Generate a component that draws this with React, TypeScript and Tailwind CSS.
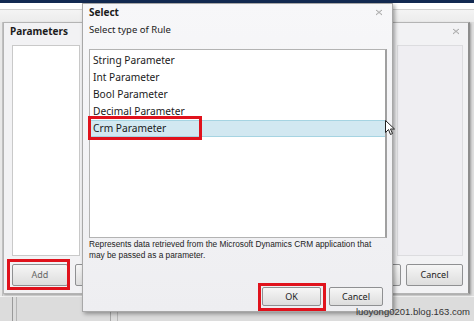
import React from 'react';

const font = { fontFamily: '"Noto Sans", "Open Sans", sans-serif' };

function CloseIcon() {
  return (
    <svg width="8" height="7" viewBox="0 0 8 7" className="text-[#a9a9a9]">
      <path d="M1 1 L7 6 M7 1 L1 6" stroke="currentColor" strokeWidth="1" fill="none" />
      <path d="M2 1 L7 5 M6 1 L1 5" stroke="currentColor" strokeWidth="0.5" fill="none" opacity="0.6" />
    </svg>
  );
}

function Button({ label, className = '' }: { label: string; className?: string }) {
  return (
    <div
      className={`flex items-center justify-center rounded-[2px] border border-[#8f9092] bg-gradient-to-b from-[#f6f6f6] to-[#dddddd] text-[9px] text-[#222] ${className}`}
    >
      {label}
    </div>
  );
}

const items = ['String Parameter', 'Int Parameter', 'Bool Parameter', 'Decimal Parameter', 'Crm Parameter'];

export default function App() {
  return (
    <div className="relative w-[474px] h-[321px] overflow-hidden bg-[#dedede]" style={font}>
      {/* page background */}
      <div className="h-[3px] bg-[#132a52]" />
      <div className="h-[7px] bg-white border-b border-[#d2d2d2]" />
      <div className="h-[12px] bg-gradient-to-b from-[#f4f4f4] to-[#ececec]" />
      <div className="flex h-[299px]">
        <div className="w-[3px] border-r border-[#c4c4c4] bg-[#e8e8e8]" />
      </div>

      {/* bottom strip lines */}
      <div className="absolute left-0 top-[296px] w-[474px] h-[25px] bg-[#dcdcdc] border-t border-[#f2f2f2]">
        <div className="absolute left-[12px] top-0 h-full w-px bg-[#9a9a9a]" />
        <div className="absolute left-[16px] top-0 h-full w-px bg-[#b5b5b5]" />
        <div className="absolute left-[110px] top-0 h-full w-px bg-[#a8a8a8]" />
        <div className="absolute left-[117px] top-0 h-full w-px bg-[#b8b8b8]" />
      </div>

      {/* Parameters window */}
      <div className="absolute left-[3px] top-[22px] w-[467px] h-[272px] flex flex-col bg-[#f2f2f4] border border-[#b4b4b4] border-r-2 border-r-[#8d8d8d] shadow-[1px_1px_2px_rgba(0,0,0,0.3)]">
        <div className="flex items-center justify-between h-[16px] mb-[6px] pl-[6px] pr-[8px]">
          <span className="text-[10px] font-bold text-[#1c1c1c]">Parameters</span>
          <CloseIcon />
        </div>
        <div className="flex justify-between pl-[8px] pr-[5px] h-[211px]">
          <div className="w-[68px] h-full bg-white border border-[#c9c9c9]" />
          <div className="w-[66px] h-full bg-[#efeef2] border border-[#dcdcdf]" />
        </div>
        <div className="flex justify-between pl-[8px] pr-[5px] mt-[8px]">
          <div className="flex gap-[7px]">
            <Button label="Add" className="w-[56px] h-[22px] text-[#666]" />
            <Button label="" className="w-[56px] h-[22px]" />
          </div>
          <div className="flex gap-[5px]">
            <Button label="OK" className="w-[56px] h-[22px]" />
            <Button label="Cancel" className="w-[57px] h-[22px]" />
          </div>
        </div>
      </div>

      {/* Select dialog */}
      <div className="absolute left-[82px] top-[3px] w-[311px] h-[309px] flex flex-col px-[6px] bg-gradient-to-b from-[#f7f7f9] to-[#eeeef1] border border-[#a8a8a8] shadow-[2px_2px_4px_rgba(0,0,0,0.35)]">
        <div className="flex items-center justify-between h-[16px] pr-[3px]">
          <span className="text-[10px] font-bold leading-[16px] text-[#1c1c1c]">Select</span>
          <CloseIcon />
        </div>
        <div className="mt-[4px] h-[12px] text-[9.5px] leading-[12px] text-[#222]">Select type of Rule</div>
        <div className="mt-[13px] h-[189px] w-[298px] flex flex-col pt-[2px] bg-white border border-[#b3b3b3] border-r-2 border-r-[#a0a0a0]">
          {items.map((item) =>
            item === 'Crm Parameter' ? (
              <div
                key={item}
                className="h-[17px] flex items-center pl-[3px] bg-[#d2e8f1] border-y border-[#a6d4e2] text-[10.2px] text-[#1a1a1a]"
              >
                {item}
              </div>
            ) : (
              <div key={item} className="h-[17px] flex items-center pl-[3px] text-[10.2px] text-[#1a1a1a]">
                {item}
              </div>
            ),
          )}
        </div>
        <div
          className="mt-[1px] whitespace-nowrap text-[8.3px] leading-[11px] text-[#222]"
          style={{ fontFamily: '"Liberation Sans", Arial, sans-serif' }}
        >
          Represents data retrieved from the Microsoft Dynamics CRM application that
          <br />
          may be passed as a parameter.
        </div>
        <div className="mt-auto mb-[5px] flex justify-end gap-[8px] pr-[3px]">
          <Button label="OK" className="w-[59px] h-[19px]" />
          <Button label="Cancel" className="w-[54px] h-[19px]" />
        </div>
      </div>

      {/* annotation boxes */}
      <div className="absolute left-[88px] top-[116px] w-[114px] h-[24px] border-[3px] border-[#e0121c]" />
      <div className="absolute left-[7px] top-[259px] w-[63px] h-[31px] border-[3px] border-[#e0121c]" />
      <div className="absolute left-[258px] top-[283px] w-[68px] h-[28px] border-[3px] border-[#e0121c]" />

      {/* mouse cursor */}
      <svg className="absolute left-[385px] top-[120px]" width="11" height="16" viewBox="0 0 11 16">
        <path d="M0.5 0.5 L0.5 12.5 L3.5 9.5 L5.5 14.5 L7.5 13.5 L5.5 9 L9.5 9 Z" fill="#fff" stroke="#222" strokeWidth="1" />
      </svg>

      {/* watermark */}
      <div
        className="absolute right-[4px] top-[305px] whitespace-nowrap text-[9.5px] leading-[13px] text-[#333]"
        style={{ fontFamily: '"Liberation Sans", Arial, sans-serif' }}
      >
        luoyong0201.blog.163.com
      </div>
    </div>
  );
}
